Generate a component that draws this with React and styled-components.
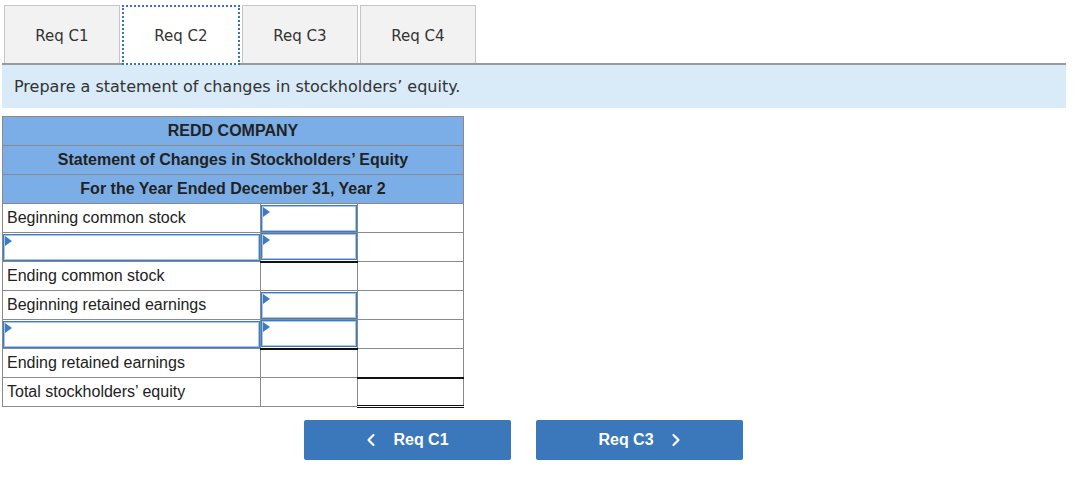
import React from 'react'
import styled, { createGlobalStyle, css } from 'styled-components'

const GlobalStyle = createGlobalStyle`
  body {
    margin: 0;
    background: #fff;
    font-family: "DejaVu Sans", Verdana, sans-serif;
  }
`

const tabs = ['Req C1', 'Req C2', 'Req C3', 'Req C4']

// c2: input | blank ; bottom: thick | double
const rows = [
  { label: 'Beginning common stock', c2: 'input' },
  { label: null, c2: 'input', c2Bottom: 'thick' },
  { label: 'Ending common stock', c2: 'blank' },
  { label: 'Beginning retained earnings', c2: 'input' },
  { label: null, c2: 'input', c2Bottom: 'thick' },
  { label: 'Ending retained earnings', c2: 'blank', c3Bottom: 'thick' },
  { label: 'Total stockholders’ equity', c2: 'blank', c3Bottom: 'double' },
]

const Chevron = ({ dir }) => (
  <svg width="10" height="14" viewBox="0 0 10 14" fill="none">
    <path
      d={dir === 'left' ? 'M7.5 2 L2.5 7 L7.5 12' : 'M2.5 2 L7.5 7 L2.5 12'}
      stroke="#fff"
      strokeWidth="2.2"
      strokeLinecap="round"
      strokeLinejoin="round"
    />
  </svg>
)

const InputBox = () => (
  <Input>
    <Marker />
  </Input>
)

const App = () => {
  return (
    <Page>
      <GlobalStyle />
      <TabBar>
        {tabs.map((t, i) => (
          <Tab key={t} $active={i === 1}>{t}</Tab>
        ))}
      </TabBar>
      <Instruction>Prepare a statement of changes in stockholders’ equity.</Instruction>

      <Table>
        <tbody>
          <tr><HeadCell colSpan={3}>REDD COMPANY</HeadCell></tr>
          <tr><HeadCell colSpan={3}>Statement of Changes in Stockholders’ Equity</HeadCell></tr>
          <tr><HeadCell colSpan={3}>For the Year Ended December 31, Year 2</HeadCell></tr>
          {rows.map((r, i) => (
            <tr key={i}>
              <LabelCell $input={!r.label}>
                {r.label ? r.label : <InputBox />}
              </LabelCell>
              <AmountCell $w={98} $bottom={r.c2Bottom} $input={r.c2 === 'input'}>
                {r.c2 === 'input' && <InputBox />}
              </AmountCell>
              <AmountCell $w={106} $bottom={r.c3Bottom} />
            </tr>
          ))}
        </tbody>
      </Table>

      <NavRow>
        <NavButton>
          <Chevron dir="left" />
          <span>Req C1</span>
        </NavButton>
        <NavButton>
          <span>Req C3</span>
          <Chevron dir="right" />
        </NavButton>
      </NavRow>
    </Page>
  )
}

const Page = styled.div`
  padding: 5px 0 30px 2px;
  width: 1064px;
`

const TabBar = styled.div`
  display: flex;
  gap: 2px;
  padding-left: 2px;
  border-bottom: 2px solid #9b9b9b;
  height: 58px;
`

const Tab = styled.div`
  width: 116px;
  height: 58px;
  display: flex;
  align-items: center;
  justify-content: center;
  padding-top: 2px;
  box-sizing: border-box;
  background: #f2f2f2;
  border: 1px solid #c6c6c6;
  border-bottom: none;
  color: #333;
  font-size: 15px;
  ${(p) => p.$active && css`
    width: 118px;
    height: 60px;
    background: #fff;
    border: 2px dotted #3a72bf;
    position: relative;
    z-index: 1;
  `}
`

const Instruction = styled.div`
  background: #d9eaf8;
  height: 43px;
  display: flex;
  align-items: center;
  padding-left: 12px;
  font-size: 16px;
  color: #333;
`

const Table = styled.table`
  margin-top: 8px;
  border-collapse: collapse;
  width: 462px;
  font-family: "Liberation Sans", Arial, sans-serif;
  font-size: 16px;
  color: #222;
`

const cellBase = css`
  border: 1px solid #8a8a8a;
  height: 29px;
  padding: 0;
  box-sizing: border-box;
`

const HeadCell = styled.td`
  ${cellBase}
  background: #7baee6;
  text-align: center;
  font-weight: bold;
  color: #222;
`

const LabelCell = styled.td`
  ${cellBase}
  padding: ${(p) => (p.$input ? '0' : '0 4px')};
  width: 258px;
`

const AmountCell = styled.td`
  ${cellBase}
  width: ${(p) => p.$w}px;
  padding: 0;
  ${(p) => p.$bottom === 'thick' && css`border-bottom: 2px solid #111;`}
  ${(p) => p.$bottom === 'double' && css`border-bottom: 3px double #111;`}
`

const Input = styled.div`
  position: relative;
  height: 27px;
  box-sizing: border-box;
  border: 1px solid #3d7cc4;
  box-shadow: inset 0 0 0 1px #a8c7ea;
  background: #fff;
`

const Marker = styled.span`
  position: absolute;
  top: 1px;
  left: 1px;
  width: 0;
  height: 0;
  border-top: 5px solid transparent;
  border-bottom: 5px solid transparent;
  border-left: 7px solid #3d7cc4;
`

const NavRow = styled.div`
  display: flex;
  gap: 25px;
  margin-top: 12px;
  padding-left: 302px;
`

const NavButton = styled.button`
  width: 207px;
  height: 40px;
  display: flex;
  align-items: center;
  justify-content: center;
  gap: 17px;
  border: none;
  border-radius: 2px;
  background: #3a77bb;
  color: #fff;
  font-family: "Liberation Sans", Arial, sans-serif;
  font-weight: bold;
  font-size: 16px;
  cursor: pointer;
`

export default App
